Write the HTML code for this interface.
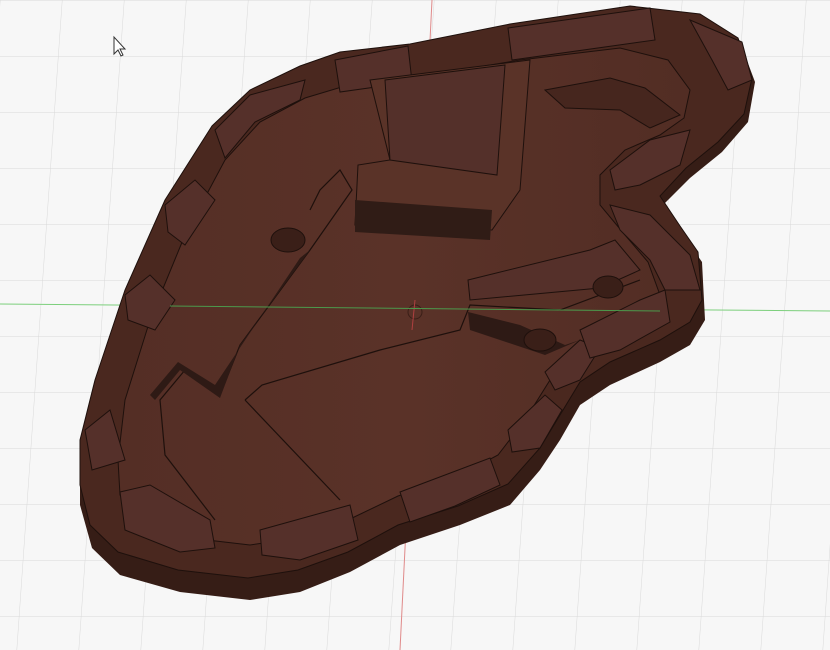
<!DOCTYPE html>
<html><head><style>html,body{margin:0;padding:0;background:#f6f6f6;width:830px;height:650px;overflow:hidden}</style></head>
<body>
<svg width="830" height="650" viewBox="0 0 830 650" xmlns="http://www.w3.org/2000/svg">
<defs>
<pattern id="g" width="62" height="56" patternUnits="userSpaceOnUse" patternTransform="skewX(-4)">
<path d="M0 0H62M0 0V56" stroke="#d9d9d9" stroke-width="1" fill="none"/>
</pattern>
<linearGradient id="wood" x1="0" y1="0" x2="1" y2="0">
<stop offset="0" stop-color="#542e25"/><stop offset="0.5" stop-color="#5a3228"/><stop offset="1" stop-color="#522d24"/>
</linearGradient>
</defs>
<rect width="830" height="650" fill="#f7f7f7"/>
<rect width="830" height="650" fill="url(#g)"/>
<line x1="432" y1="0" x2="400" y2="650" stroke="#e08a8a" stroke-width="1"/>
<line x1="0" y1="304" x2="830" y2="311" stroke="#7ccf7c" stroke-width="1"/>
<path d="M80 445 L95 385 L125 295 L165 205 L212 132 L250 96 L300 72 L340 58 L410 48 L510 28 L630 10 L700 18 L740 42 L755 82 L748 122 L722 152 L690 178 L662 206 L684 236 L702 262 L705 320 L690 345 L660 362 L610 385 L580 405 L560 440 L540 470 L510 505 L460 525 L400 545 L350 572 L300 592 L250 600 L180 592 L120 575 L92 548 L80 505 Z" fill="#361d16"/>
<path d="M80 440 L95 380 L125 290 L165 200 L212 126 L250 90 L300 66 L340 52 L410 44 L510 24 L630 6 L700 14 L738 38 L752 78 L744 114 L718 142 L686 168 L660 196 L680 226 L698 252 L702 300 L690 322 L660 340 L610 362 L580 382 L560 415 L540 448 L508 484 L458 506 L398 525 L348 552 L298 570 L248 578 L178 570 L118 552 L90 525 L80 485 Z" fill="#4a281f" stroke="#1e100c" stroke-width="1"/>
<path d="M118 460 L125 400 L150 320 L185 235 L225 160 L260 122 L305 98 L345 86 L412 78 L520 60 L620 48 L668 60 L690 90 L684 118 L660 135 L625 150 L600 175 L600 205 L625 235 L648 262 L660 295 L650 310 L610 330 L575 350 L550 380 L525 420 L498 455 L455 478 L398 496 L348 520 L298 538 L250 545 L190 538 L140 520 L120 495 Z" fill="url(#wood)" stroke="#1e100c" stroke-width="1"/>
<g fill="#55302a" stroke="#1e100c" stroke-width="1">
<path d="M335 60 L408 46 L412 82 L340 92 Z"/>
<path d="M508 28 L650 8 L655 40 L512 60 Z"/>
<path d="M690 20 L742 42 L752 80 L728 90 L712 60 Z"/>
<path d="M215 130 L250 95 L305 80 L300 100 L255 122 L225 158 Z"/>
<path d="M165 205 L195 180 L215 200 L185 245 L168 232 Z"/>
<path d="M125 295 L150 275 L175 300 L155 330 L128 320 Z"/>
<path d="M85 430 L110 410 L125 460 L92 470 Z"/>
<path d="M120 492 L150 485 L210 520 L215 548 L180 552 L125 530 Z"/>
<path d="M260 530 L350 505 L358 540 L300 560 L262 555 Z"/>
<path d="M400 492 L490 458 L500 485 L455 506 L410 522 Z"/>
<path d="M508 430 L545 395 L562 410 L540 448 L512 452 Z"/>
<path d="M545 372 L580 340 L600 348 L580 380 L555 390 Z"/>
<path d="M580 330 L640 300 L665 290 L670 322 L620 350 L590 358 Z"/>
<path d="M610 170 L650 140 L690 130 L680 165 L640 185 L615 190 Z"/>
<path d="M610 205 L650 215 L690 255 L700 290 L665 290 L650 260 L620 230 Z"/>
</g>
<path d="M370 80 L530 60 L520 190 L492 230 L355 225 L358 165 L390 160 Z" fill="#5a3328" stroke="#1e100c" stroke-width="1"/>
<path d="M355 200 L492 210 L490 240 L355 232 Z" fill="#301c16"/>
<path d="M385 80 L505 65 L497 175 L390 160 Z" fill="#54302a" stroke="#1e100c"/>
<path d="M545 90 L610 78 L645 88 L680 115 L650 128 L620 110 L565 108 Z" fill="#46261e" stroke="#1e100c"/>
<g fill="none" stroke="#1e100c" stroke-width="1.2">
<path d="M310 210 L320 190 L340 170 L352 190 L310 250 L240 345 L220 395 L185 370 L160 400 L165 455 L215 520"/>
<path d="M245 400 L262 385 L380 350 L460 330 L470 305 L560 310 L640 280"/>
<path d="M245 400 L340 500"/>
</g>
<path d="M300 258 L310 250 L240 345 L220 398 L180 370 L155 400 L150 395 L178 362 L215 385 Z" fill="#2e1a15"/>
<path d="M468 280 L590 250 L615 240 L640 270 L600 288 L470 300 Z" fill="#55302a" stroke="#1e100c"/>
<path d="M468 312 L520 325 L565 345 L580 340 L545 355 L470 330 Z" fill="#2e1a15"/>
<ellipse cx="288" cy="240" rx="17" ry="12" fill="#3a1f18" stroke="#1e100c"/>
<ellipse cx="608" cy="287" rx="15" ry="11" fill="#3a1f18" stroke="#1e100c"/>
<ellipse cx="540" cy="340" rx="16" ry="11" fill="#3a1f18" stroke="#1e100c"/>
<circle cx="415" cy="312" r="7" fill="none" stroke="#3a1f18"/>
<line x1="415" y1="300" x2="412" y2="330" stroke="#b04040" stroke-width="1"/>
<line x1="170" y1="306" x2="660" y2="311" stroke="#4c9a4c" stroke-width="1"/>
<path d="M114 37 L114 54 L118 50 L121 56 L123 55 L120 49 L125 49 Z" fill="#fff" stroke="#333" stroke-width="1"/>
</svg>
</body></html>
